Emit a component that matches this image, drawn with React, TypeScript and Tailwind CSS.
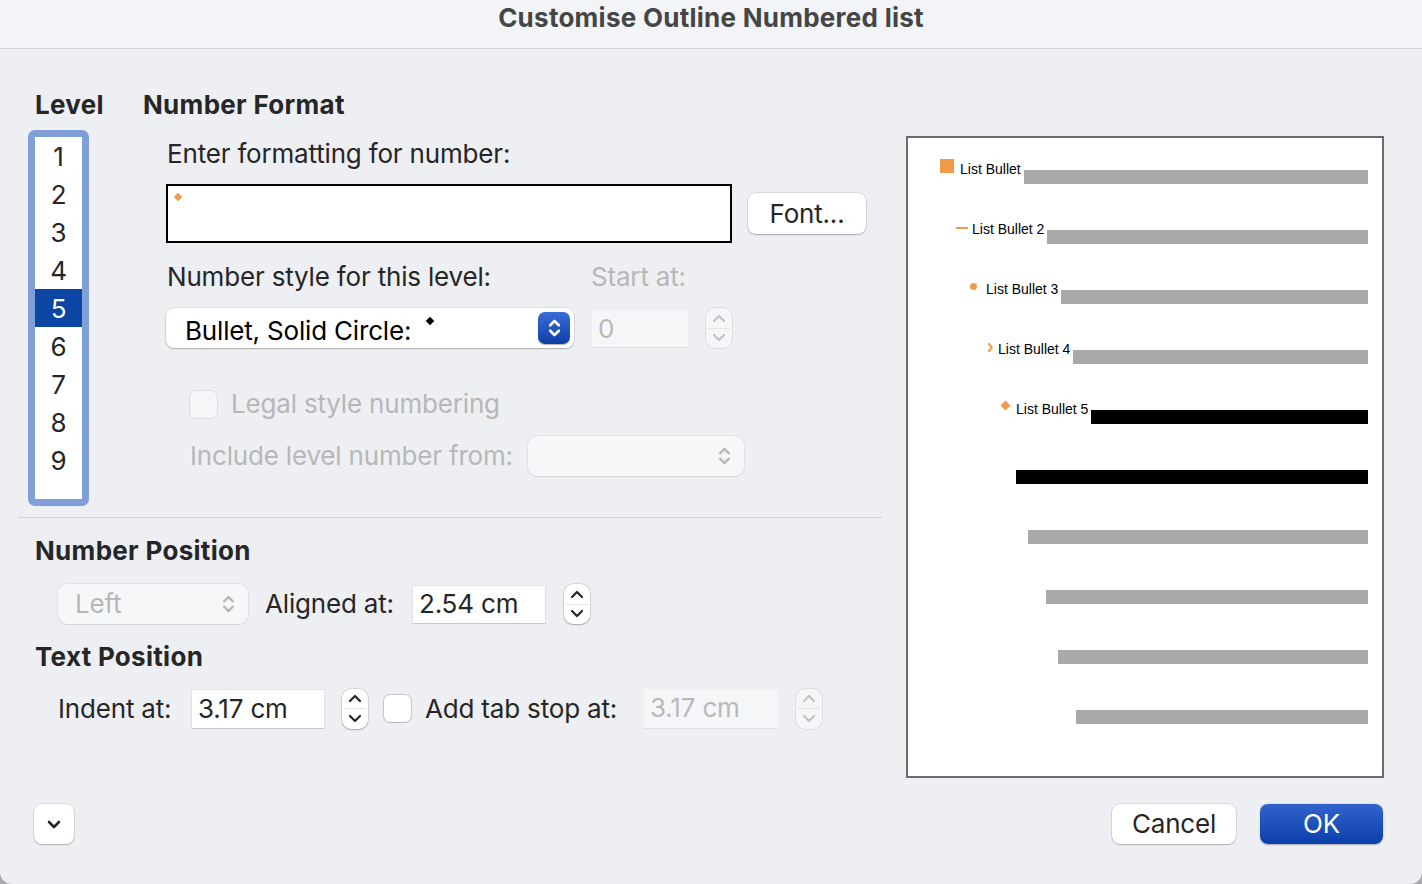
import React from "react";

function UpDown({ color, w = 12, h = 20, sw = 2.2 }: { color: string; w?: number; h?: number; sw?: number }) {
  return (
    <svg width={w} height={h} viewBox="0 0 12 20" fill="none">
      <path d="M2 7.5 L6 3.5 L10 7.5" stroke={color} strokeWidth={sw} strokeLinecap="round" strokeLinejoin="round" />
      <path d="M2 12.5 L6 16.5 L10 12.5" stroke={color} strokeWidth={sw} strokeLinecap="round" strokeLinejoin="round" />
    </svg>
  );
}

function Chev({ dir, color }: { dir: "up" | "down"; color: string }) {
  return (
    <svg width="14" height="9" viewBox="0 0 14 9" fill="none">
      {dir === "up" ? (
        <path d="M2 7 L7 2 L12 7" stroke={color} strokeWidth="2.2" strokeLinecap="round" strokeLinejoin="round" />
      ) : (
        <path d="M2 2 L7 7 L12 2" stroke={color} strokeWidth="2.2" strokeLinecap="round" strokeLinejoin="round" />
      )}
    </svg>
  );
}

function Stepper({ disabled }: { disabled?: boolean }) {
  const c = disabled ? "#c3c3c6" : "#262626";
  return (
    <div
      className={
        disabled
          ? "flex h-[40px] w-[26px] flex-col rounded-[9px] bg-[#f5f6f8] shadow-[0_0_0_1px_rgba(0,0,0,0.07)]"
          : "flex h-[40px] w-[26px] flex-col rounded-[9px] bg-white shadow-[0_0_0_0.5px_rgba(0,0,0,0.18),0_1px_1.5px_rgba(0,0,0,0.22)]"
      }
    >
      <div className="flex flex-1 items-center justify-center pt-[1px]">
        <Chev dir="up" color={c} />
      </div>
      <div className="mx-[2px] h-px bg-[#e3e3e6]" />
      <div className="flex flex-1 items-center justify-center pb-[1px]">
        <Chev dir="down" color={c} />
      </div>
    </div>
  );
}

function Checkbox({ disabled }: { disabled?: boolean }) {
  return (
    <div
      className={
        disabled
          ? "h-[27px] w-[27px] shrink-0 rounded-[6px] bg-[#f5f6f8] shadow-[0_0_0_1px_rgba(0,0,0,0.08)]"
          : "h-[27px] w-[27px] shrink-0 rounded-[6px] bg-white shadow-[0_0_0_1px_rgba(0,0,0,0.16),0_1px_1px_rgba(0,0,0,0.08)]"
      }
    />
  );
}

function PreviewRow({
  indent,
  bullet,
  gap,
  label,
  black,
}: {
  indent: number;
  bullet?: React.ReactNode;
  gap?: number;
  label?: string;
  black?: boolean;
}) {
  return (
    <div className="flex h-[23px] items-end" style={{ paddingLeft: indent }}>
      {label ? (
        <div className="mb-[7px] mr-[3px] flex items-start">
          {bullet}
          <span className="text-[14px] leading-[16px] text-black" style={{ marginLeft: gap }}>
            {label}
          </span>
        </div>
      ) : null}
      <div className={black ? "h-[14px] flex-1 bg-black" : "h-[14px] flex-1 bg-[#a9a9a9]"} />
    </div>
  );
}

export default function App() {
  const levels = [1, 2, 3, 4, 5, 6, 7, 8, 9];
  return (
    <div className="h-[884px] w-[1422px] bg-[#a8a8aa] font-[family-name:'Inter','Liberation_Sans',sans-serif] text-[26px] tracking-[-0.18px] text-[#262626]">
      <div className="flex h-[884px] flex-col overflow-hidden rounded-b-[12px] bg-[#eeeff3]">
        {/* Title bar */}
        <div className="h-[49px] shrink-0 border-b border-[#d2d2d6] bg-[#f3f4f8] pt-[2px] text-center text-[26px] font-bold leading-[32px] tracking-[0.26px] text-[#454545]">
          Customise Outline Numbered list
        </div>

        {/* Content */}
        <div className="flex pl-[18px]">
          {/* Left column */}
          <div className="flex w-[864px] flex-col">
            <div className="flex">
              {/* Level */}
              <div className="ml-[10px] flex w-[115px] flex-col">
                <div className="mt-[40px] pl-[7px] font-bold leading-[32px] tracking-[0.3px]">Level</div>
                <div className="mt-[9px] h-[376px] w-[61px] rounded-[7px] bg-[#7f9fd6] p-[7px]">
                  <div className="h-full w-full bg-white">
                    {levels.map((n) => (
                      <div
                        key={n}
                        className={
                          n === 5
                            ? "flex h-[38px] items-center justify-center bg-[#0b46a4] text-white"
                            : "flex h-[38px] items-center justify-center text-[#262626]"
                        }
                      >
                        {n}
                      </div>
                    ))}
                  </div>
                </div>
              </div>

              {/* Number Format */}
              <div className="flex flex-col">
                <div className="mt-[40px] font-bold leading-[32px] tracking-[0.3px]">Number Format</div>
                <div className="flex flex-col pl-[23px]">
                  <div className="mt-[17px] pl-[1px] leading-[32px]">Enter formatting for number:</div>
                  <div className="mt-[14px] flex items-start">
                    <div className="h-[59px] w-[566px] border-2 border-black bg-white pl-[6px] pt-[7px]">
                      <div className="ml-[1px] mt-[1px] h-[6px] w-[6px] rotate-45 bg-[#f09a4b]" />
                    </div>
                    <div className="ml-[16px] mt-[9px] flex h-[41px] w-[118px] items-center justify-center rounded-[8px] bg-white leading-[32px] shadow-[0_0_0_0.5px_rgba(0,0,0,0.16),0_1px_1.5px_rgba(0,0,0,0.22)]">
                      Font...
                    </div>
                  </div>
                  <div className="mt-[18px] flex leading-[32px]">
                    <div className="w-[425px] pl-[1px]">Number style for this level:</div>
                    <div className="text-[#b7b7b9]">Start at:</div>
                  </div>
                  <div className="mt-[15px] flex items-start">
                    <div className="flex h-[40px] w-[408px] items-center rounded-[8px] bg-white pl-[19px] pr-[4px] shadow-[0_0_0_0.5px_rgba(0,0,0,0.14),0_1px_1.5px_rgba(0,0,0,0.22)]">
                      <span className="mt-[5px] leading-[32px] text-black">Bullet, Solid Circle:</span>
                      <span className="mb-[14px] ml-[16px] h-[6px] w-[6px] rotate-45 bg-black" />
                      <div className="ml-auto flex h-[32px] w-[32px] items-center justify-center rounded-[7px] bg-gradient-to-b from-[#3a6ed6] to-[#0a3ea8] shadow-[0_0.5px_1px_rgba(0,0,0,0.3)]">
                        <UpDown color="#ffffff" w={13} h={22} sw={2.4} />
                      </div>
                    </div>
                    <div className="ml-[18px] mt-[2px] flex h-[38px] w-[96px] items-center border-b border-[#dedfe2] bg-[#f5f6f8] pl-[6px] leading-[32px] text-[#b9b9bb]">
                      0
                    </div>
                    <div className="ml-[18px]">
                      <Stepper disabled />
                    </div>
                  </div>
                  <div className="mt-[40px] flex h-[32px] items-center pl-[24px]">
                    <Checkbox disabled />
                    <span className="ml-[14px] leading-[32px] text-[#b7b7b9]">Legal style numbering</span>
                  </div>
                  <div className="mt-[16px] flex h-[40px] items-center pl-[24px]">
                    <span className="w-[338px] leading-[32px] text-[#b7b7b9]">Include level number from:</span>
                    <div className="flex h-[40px] w-[216px] items-center justify-end rounded-[9px] bg-[#f6f7f9] pr-[13px] shadow-[0_0_0_1px_rgba(0,0,0,0.05),0_1px_1px_rgba(0,0,0,0.06)]">
                      <UpDown color="#b9b9bc" w={13} h={22} sw={2.2} />
                    </div>
                  </div>
                </div>
              </div>
            </div>

            <div className="mt-[11px] h-px bg-[#d3d3d7]" />

            <div className="mt-[17px] pl-[17px] font-bold leading-[32px] tracking-[0.3px]">Number Position</div>
            <div className="mt-[17px] flex h-[40px] items-center pl-[40px]">
              <div className="flex h-[40px] w-[190px] items-center rounded-[9px] bg-[#f6f7f9] pl-[17px] pr-[13px] shadow-[0_0_0_1px_rgba(0,0,0,0.05),0_1px_1px_rgba(0,0,0,0.06)]">
                <span className="leading-[32px] text-[#b7b7b9]">Left</span>
                <div className="ml-auto">
                  <UpDown color="#b9b9bc" w={13} h={22} sw={2.2} />
                </div>
              </div>
              <span className="ml-[17px] w-[147px] leading-[32px]">Aligned at:</span>
              <div className="flex h-[39px] w-[134px] items-center border border-[#e2e2e4] border-b-[#c9c9cc] bg-white pl-[6px] leading-[32px]">
                2.54 cm
              </div>
              <div className="ml-[18px]">
                <Stepper />
              </div>
            </div>

            <div className="mt-[17px] pl-[17px] font-bold leading-[32px] tracking-[0.3px]">Text Position</div>
            <div className="mt-[15px] flex h-[41px] items-center pl-[40px]">
              <span className="w-[133px] leading-[32px]">Indent at:</span>
              <div className="flex h-[40px] w-[134px] items-center border border-[#e2e2e4] border-b-[#c9c9cc] bg-white pl-[6px] leading-[32px]">
                3.17 cm
              </div>
              <div className="ml-[17px]">
                <Stepper />
              </div>
              <div className="ml-[16px]">
                <Checkbox />
              </div>
              <span className="ml-[14px] w-[219px] leading-[32px]">Add tab stop at:</span>
              <div className="flex h-[40px] w-[134px] items-center border-b border-[#dedfe2] bg-[#f5f6f8] pl-[6px] leading-[32px] text-[#b9b9bb]">
                3.17 cm
              </div>
              <div className="ml-[18px]">
                <Stepper disabled />
              </div>
            </div>
          </div>

          {/* Preview */}
          <div className="ml-[24px] mt-[87px] flex h-[642px] w-[478px] flex-col gap-[37px] border-2 border-[#6b6b6b] bg-white pr-[14px] pt-[23px] font-[family-name:'Liberation_Sans',Arial,sans-serif] tracking-normal">
            <PreviewRow
              indent={32}
              gap={6}
              label="List Bullet"
              bullet={<div className="-mt-[2px] h-[14px] w-[14px] bg-[#f09a4b]" />}
            />
            <PreviewRow
              indent={48}
              gap={4}
              label="List Bullet 2"
              bullet={<div className="mt-[6px] h-[2px] w-[12px] bg-[#f09a4b]" />}
            />
            <PreviewRow
              indent={62}
              gap={9}
              label="List Bullet 3"
              bullet={<div className="mt-[2px] h-[7px] w-[7px] rounded-full bg-[#f09a4b]" />}
            />
            <PreviewRow
              indent={80}
              gap={5}
              label="List Bullet 4"
              bullet={
                <svg className="mt-[2px]" width="5" height="9" viewBox="0 0 5 9" fill="none">
                  <path d="M1 1 L4 4.5 L1 8" stroke="#f09a4b" strokeWidth="2" strokeLinecap="round" />
                </svg>
              }
            />
            <PreviewRow
              indent={93}
              gap={7}
              label="List Bullet 5"
              bullet={<div className="ml-[1px] mt-[1px] h-[7px] w-[7px] rotate-45 bg-[#f09a4b]" />}
              black
            />
            <PreviewRow indent={108} black />
            <PreviewRow indent={120} />
            <PreviewRow indent={138} />
            <PreviewRow indent={150} />
            <PreviewRow indent={168} />
          </div>
        </div>

        {/* Bottom buttons */}
        <div className="mt-[26px] flex h-[40px] items-center pl-[34px] pr-[39px]">
          <div className="flex h-[40px] w-[40px] items-center justify-center rounded-[8px] bg-white shadow-[0_0_0_0.5px_rgba(0,0,0,0.16),0_1px_1.5px_rgba(0,0,0,0.22)]">
            <svg width="14" height="9" viewBox="0 0 14 9" fill="none">
              <path d="M2 2 L7 7 L12 2" stroke="#262626" strokeWidth="2.6" strokeLinecap="round" strokeLinejoin="round" />
            </svg>
          </div>
          <div className="ml-auto flex h-[40px] w-[124px] items-center justify-center rounded-[8px] bg-white leading-[32px] shadow-[0_0_0_0.5px_rgba(0,0,0,0.16),0_1px_1.5px_rgba(0,0,0,0.22)]">
            Cancel
          </div>
          <div className="ml-[24px] flex h-[40px] w-[123px] items-center justify-center rounded-[8px] bg-gradient-to-b from-[#3063cc] to-[#0b3fa9] leading-[32px] text-white shadow-[0_0.5px_1.5px_rgba(0,0,0,0.3)]">
            OK
          </div>
        </div>
      </div>
    </div>
  );
}
